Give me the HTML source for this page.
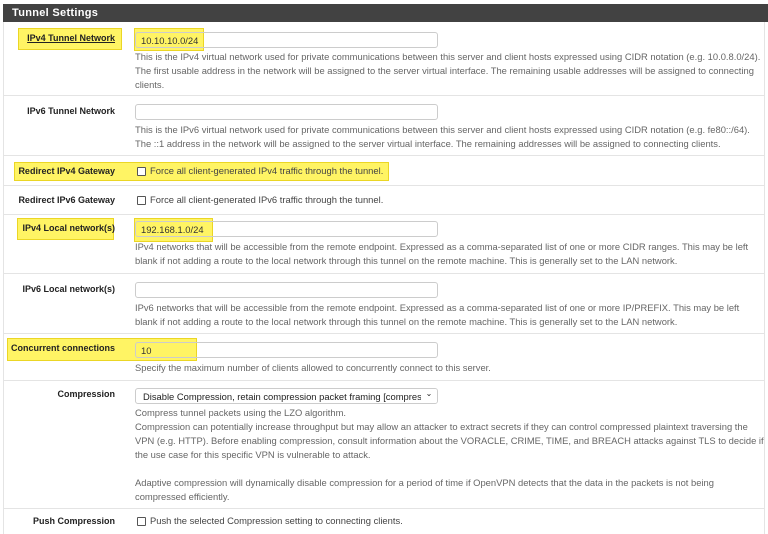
<!DOCTYPE html>
<html><head><style>
*{margin:0;padding:0;box-sizing:border-box}
body{width:768px;height:534px;background:#fff;position:relative;overflow:hidden;font-family:"Liberation Sans",Arial,sans-serif;font-size:9.4px;color:#222}
.a{position:absolute;white-space:nowrap}
.hdr{left:3px;top:4px;width:765px;height:18px;background:#424242;color:#fff;font-weight:bold;font-size:11px;padding:3px 0 0 9px;letter-spacing:.3px}
.frame{left:3px;top:22px;width:762px;height:512px;border-left:1px solid #e4e4e4;border-right:1px solid #e4e4e4}
.hr{left:3px;width:762px;height:1px;background:#e4e4e4}
.lbl{font-weight:bold;font-size:9px;color:#222;text-align:right;width:112px;left:3px}
.inp{left:135px;width:303px;height:16px;border:1px solid #ccc;border-radius:3px;font-size:9.4px;padding:2px 5px;color:#333;background:#fff}
.help{left:135px;color:#666;line-height:14px;font-size:9.4px}
.hl{background:#fff34a;border:1px solid #e8d000;opacity:.85}
.cb{width:9px;height:9px;border:1px solid #555;border-radius:1px;background:#fff}
.t{color:#444;font-size:9.4px}
</style></head><body>
<div class="a frame"></div>
<div class="a hdr">Tunnel Settings</div>

<div class="a hl" style="left:18px;top:28px;width:104px;height:22px"></div>
<div class="a hl" style="left:134px;top:28px;width:70px;height:23px"></div>
<div class="a lbl" style="top:33px;text-decoration:underline">IPv4 Tunnel Network</div>
<div class="a inp" style="top:32px;background:transparent">10.10.10.0/24</div>
<div class="a help" style="top:50px">This is the IPv4 virtual network used for private communications between this server and client hosts expressed using CIDR notation (e.g. 10.0.8.0/24).<br>The first usable address in the network will be assigned to the server virtual interface. The remaining usable addresses will be assigned to connecting<br>clients.</div>
<div class="a hr" style="top:95px"></div>

<div class="a lbl" style="top:106px">IPv6 Tunnel Network</div>
<div class="a inp" style="top:104px"></div>
<div class="a help" style="top:123px">This is the IPv6 virtual network used for private communications between this server and client hosts expressed using CIDR notation (e.g. fe80::/64).<br>The ::1 address in the network will be assigned to the server virtual interface. The remaining addresses will be assigned to connecting clients.</div>
<div class="a hr" style="top:155px"></div>

<div class="a hl" style="left:14px;top:162px;width:375px;height:19px"></div>
<div class="a lbl" style="top:166px">Redirect IPv4 Gateway</div>
<div class="a cb" style="left:137px;top:167px"></div>
<div class="a t" style="left:150px;top:165px">Force all client-generated IPv4 traffic through the tunnel.</div>
<div class="a hr" style="top:185px"></div>

<div class="a lbl" style="top:195px">Redirect IPv6 Gateway</div>
<div class="a cb" style="left:137px;top:196px"></div>
<div class="a t" style="left:150px;top:194px">Force all client-generated IPv6 traffic through the tunnel.</div>
<div class="a hr" style="top:214px"></div>

<div class="a hl" style="left:17px;top:218px;width:97px;height:22px"></div>
<div class="a hl" style="left:134px;top:218px;width:79px;height:24px"></div>
<div class="a lbl" style="top:223px">IPv4 Local network(s)</div>
<div class="a inp" style="top:221px;background:transparent">192.168.1.0/24</div>
<div class="a help" style="top:240px">IPv4 networks that will be accessible from the remote endpoint. Expressed as a comma-separated list of one or more CIDR ranges. This may be left<br>blank if not adding a route to the local network through this tunnel on the remote machine. This is generally set to the LAN network.</div>
<div class="a hr" style="top:273px"></div>

<div class="a lbl" style="top:284px">IPv6 Local network(s)</div>
<div class="a inp" style="top:282px"></div>
<div class="a help" style="top:301px">IPv6 networks that will be accessible from the remote endpoint. Expressed as a comma-separated list of one or more IP/PREFIX. This may be left<br>blank if not adding a route to the local network through this tunnel on the remote machine. This is generally set to the LAN network.</div>
<div class="a hr" style="top:333px"></div>

<div class="a hl" style="left:7px;top:338px;width:190px;height:23px"></div>
<div class="a lbl" style="top:343px">Concurrent connections</div>
<div class="a inp" style="top:342px;background:transparent">10</div>
<div class="a help" style="top:361px">Specify the maximum number of clients allowed to concurrently connect to this server.</div>
<div class="a hr" style="top:380px"></div>

<div class="a lbl" style="top:389px">Compression</div>
<div class="a inp" style="top:388px;color:#222;padding-left:7px;overflow:hidden">Disable Compression, retain compression packet framing [compres<span style="position:absolute;right:0;top:0;width:16px;height:14px;background:#fff;text-align:center;font-size:8px">&#8964;</span></div>
<div class="a help" style="top:406px">Compress tunnel packets using the LZO algorithm.<br>Compression can potentially increase throughput but may allow an attacker to extract secrets if they can control compressed plaintext traversing the<br>VPN (e.g. HTTP). Before enabling compression, consult information about the VORACLE, CRIME, TIME, and BREACH attacks against TLS to decide if<br>the use case for this specific VPN is vulnerable to attack.<br><br>Adaptive compression will dynamically disable compression for a period of time if OpenVPN detects that the data in the packets is not being<br>compressed efficiently.</div>
<div class="a hr" style="top:508px"></div>

<div class="a lbl" style="top:516px">Push Compression</div>
<div class="a cb" style="left:137px;top:517px"></div>
<div class="a t" style="left:150px;top:515px">Push the selected Compression setting to connecting clients.</div>
</body></html>
